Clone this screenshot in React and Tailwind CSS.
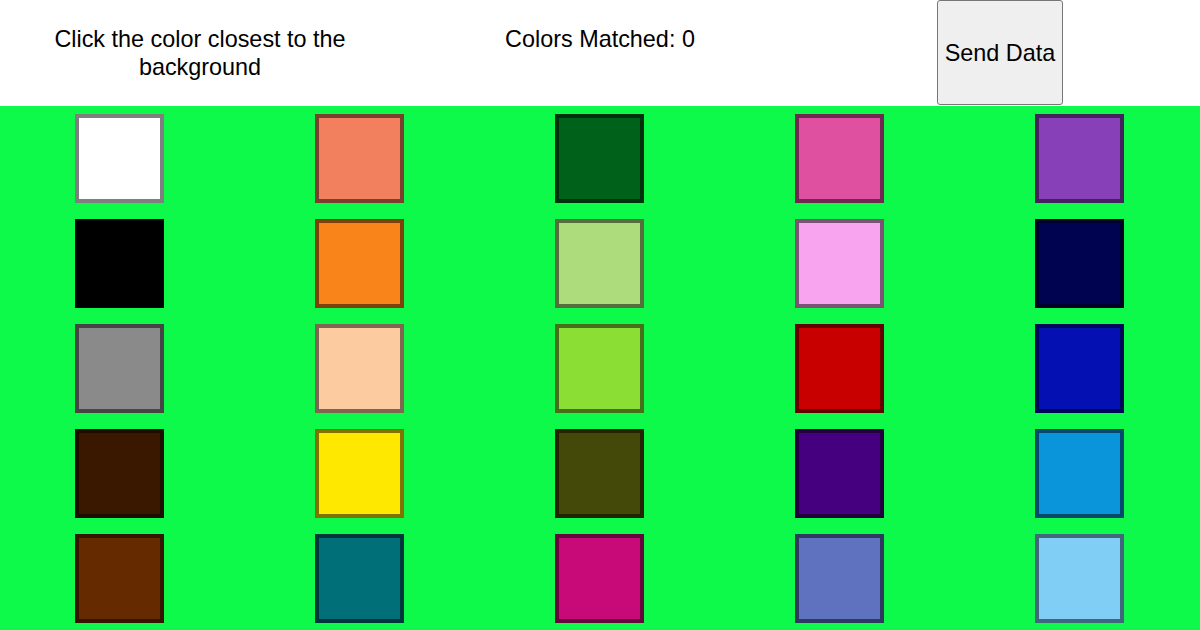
import React, { useState } from 'react'

const COLORS = [
  ['#ffffff', '#f2805f', '#00621a', '#df50a0', '#8840b8'],
  ['#000000', '#f8841a', '#acdc7c', '#f8a4ee', '#000450'],
  ['#8a8a8a', '#fccca0', '#8ade34', '#c80000', '#0510b3'],
  ['#3a1800', '#fee800', '#444808', '#450080', '#0a94da'],
  ['#662a00', '#006f78', '#c80a78', '#5e72c0', '#80cef6'],
]

// 顶部信息栏
function Header({ matched }) {
  return (
    <header className="grid grid-cols-3 h-[106px] bg-white text-black text-[23.4px] leading-[27.6px]">
      <div className="flex justify-center pt-[26px] px-[50px] text-center">
        <p>Click the color closest to the background</p>
      </div>
      <div className="flex justify-center pt-[26px] text-center">
        <p>Colors Matched: {matched}</p>
      </div>
      <div className="flex justify-center">
        <button className="h-[105px] w-[126px] bg-[#efefef] border border-[#767676] rounded-[3px] px-[6px] pt-[2px] text-[23.4px] whitespace-nowrap">
          Send Data
        </button>
      </div>
    </header>
  )
}

export default function App() {
  const [matched, setMatched] = useState(0)

  return (
    <div className="w-[1200px] h-[630px] overflow-hidden bg-[#0efa4a]" style={{ fontFamily: '"Liberation Sans", Arial, sans-serif' }}>
      <Header matched={matched} />
      <div className="grid grid-cols-5 auto-rows-[105px] pt-2">
        {COLORS.flat().map((c, i) => (
          <div key={i} className="flex justify-center pr-[1px]">
            <div
              onClick={() => setMatched(m => m)}
              className="w-[89px] h-[89px] border-4 border-black/50 cursor-pointer"
              style={{ backgroundColor: c }}
            />
          </div>
        ))}
      </div>
    </div>
  )
}
